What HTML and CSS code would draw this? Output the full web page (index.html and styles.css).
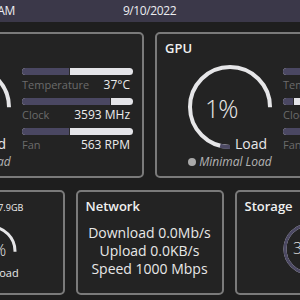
FILE: index.html
```html
<!DOCTYPE html>
<html>
<head>
<meta charset="utf-8">
<link rel="stylesheet" href="styles.css">
</head>
<body>
<div class="dash">
  <header class="topbar">
    <span class="time">10:24 AM</span>
    <span class="date">9/10/2022</span>
    <span class="spacer"></span>
  </header>

  <div class="row-top">
    <section class="panel panel-big">
      <h2 class="panel-title">CPU</h2>
      <div class="panel-body">
        <div class="gauge-col">
          <div class="gauge gauge-lg">
            <svg width="88" height="88" viewBox="0 0 88 88">
              <circle class="ring-track" cx="44" cy="44" r="40" stroke-dasharray="188.5 251.3" transform="rotate(90 44 44)"/>
              <circle class="ring-value" cx="44" cy="44" r="40" stroke-dasharray="14 251.3" transform="rotate(90 44 44)"/>
            </svg>
            <span class="gauge-pct">4%</span>
            <span class="gauge-load">Load</span>
          </div>
          <div class="status"><span class="dot"></span>Minimal Load</div>
        </div>
        <div class="stats">
          <div class="stat">
            <div class="bar"><div class="bar-fill" style="width:43%"></div></div>
            <div class="stat-row"><span class="stat-label">Temperature</span><span class="stat-value">37°C</span></div>
          </div>
          <div class="stat">
            <div class="bar"><div class="bar-fill" style="width:80%"></div></div>
            <div class="stat-row"><span class="stat-label">Clock</span><span class="stat-value">3593 MHz</span></div>
          </div>
          <div class="stat">
            <div class="bar"><div class="bar-fill" style="width:43%"></div></div>
            <div class="stat-row"><span class="stat-label">Fan</span><span class="stat-value">563 RPM</span></div>
          </div>
        </div>
      </div>
    </section>

    <section class="panel panel-big">
      <h2 class="panel-title">GPU</h2>
      <div class="panel-body">
        <div class="gauge-col">
          <div class="gauge gauge-lg">
            <svg width="88" height="88" viewBox="0 0 88 88">
              <circle class="ring-track" cx="44" cy="44" r="40" stroke-dasharray="188.5 251.3" transform="rotate(90 44 44)"/>
              <circle class="ring-value" cx="44" cy="44" r="40" stroke-dasharray="10 251.3" transform="rotate(90 44 44)"/>
            </svg>
            <span class="gauge-pct">1%</span>
            <span class="gauge-load">Load</span>
          </div>
          <div class="status"><span class="dot"></span>Minimal Load</div>
        </div>
        <div class="stats">
          <div class="stat">
            <div class="bar"><div class="bar-fill" style="width:40%"></div></div>
            <div class="stat-row"><span class="stat-label">Temperature</span><span class="stat-value">34°C</span></div>
          </div>
          <div class="stat">
            <div class="bar"><div class="bar-fill" style="width:10%"></div></div>
            <div class="stat-row"><span class="stat-label">Clock</span><span class="stat-value">210 MHz</span></div>
          </div>
          <div class="stat">
            <div class="bar"><div class="bar-fill" style="width:30%"></div></div>
            <div class="stat-row"><span class="stat-label">Fan</span><span class="stat-value">0 RPM</span></div>
          </div>
        </div>
      </div>
    </section>
  </div>

  <div class="row-bottom">
    <section class="panel panel-small">
      <h2 class="panel-title">Memory <span class="title-sub">5.1/7.9GB</span></h2>
      <div class="gauge gauge-sm">
        <svg width="54" height="54" viewBox="0 0 54 54">
          <circle class="ring-track thin" cx="27" cy="27" r="24" stroke-dasharray="113.1 150.8" transform="rotate(90 27 27)"/>
          <circle class="ring-value thin" cx="27" cy="27" r="24" stroke-dasharray="40 150.8" transform="rotate(90 27 27)"/>
        </svg>
        <span class="gauge-pct">35%</span>
        <span class="gauge-load">Load</span>
      </div>
    </section>

    <section class="panel panel-small">
      <h2 class="panel-title">Network</h2>
      <div class="net-lines">
        <p>Download 0.0Mb/s</p>
        <p>Upload 0.0KB/s</p>
        <p>Speed 1000 Mbps</p>
      </div>
    </section>

    <section class="panel panel-small">
      <h2 class="panel-title">Storage</h2>
      <div class="gauge gauge-sm">
        <svg width="54" height="54" viewBox="0 0 54 54">
          <circle class="ring-track thin" cx="27" cy="27" r="24" stroke-dasharray="113.1 150.8" transform="rotate(90 27 27)"/>
          <circle class="ring-value thin" cx="27" cy="27" r="24" stroke-dasharray="100 150.8" transform="rotate(90 27 27)"/>
        </svg>
        <span class="gauge-pct">38%</span>
        <span class="gauge-load">Used</span>
      </div>
    </section>
  </div>
</div>
</body>
</html>
```

FILE: styles.css
```css
* { box-sizing: border-box; }

html, body {
  margin: 0;
  padding: 0;
  background: #1e1e1e;
  overflow: hidden;
}

body {
  font-family: "Open Sans", "DejaVu Sans", sans-serif;
  color: #e8e8e8;
}

.dash {
  width: 511px;
  margin-left: -106px;
}

.topbar {
  height: 22px;
  background: #3b3849;
  display: grid;
  grid-template-columns: 1fr auto 1fr;
  align-items: center;
  font-size: 12px;
  letter-spacing: -0.4px;
  line-height: 22px;
  color: #ececf0;
}

.time {
  justify-self: end;
  padding-right: 108px;
}

.row-top {
  display: flex;
  gap: 11px;
  margin-top: 10px;
}

.panel {
  background: #232323;
  border: 2px solid #7a7a7a;
  border-radius: 5px;
}

.panel-big {
  width: 250px;
  height: 146px;
}

.panel-title {
  margin: 0;
  padding: 6px 0 0 8px;
  font-size: 13px;
  line-height: 16px;
  font-weight: 600;
  color: #f0f0f0;
}

.title-sub {
  font-size: 9px;
  font-weight: 500;
}

.panel-body {
  display: flex;
  padding-left: 29px;
  gap: 9px;
}

.gauge-col {
  width: 88px;
  display: flex;
  flex-direction: column;
  align-items: center;
}

.gauge {
  position: relative;
}

.gauge svg {
  display: block;
}

.gauge-lg {
  width: 88px;
  height: 88px;
  margin-top: 7px;
}

.ring-track {
  fill: none;
  stroke: #e6e6e8;
  stroke-width: 4;
}

.ring-value {
  fill: none;
  stroke: #4c4963;
  stroke-width: 4;
}

.thin {
  stroke-width: 3;
}

.gauge-lg .gauge-pct {
  position: absolute;
  left: 19px;
  top: 33px;
  font-size: 25px;
  line-height: 1;
  font-weight: 300;
  letter-spacing: -1px;
}

.gauge-lg .gauge-load {
  position: absolute;
  left: 49px;
  top: 74px;
  font-size: 14px;
  line-height: 1;
}

.status {
  margin-top: 4px;
  display: flex;
  align-items: center;
  gap: 3px;
  font-size: 12px;
  line-height: 14px;
  font-style: italic;
  color: #b4b4b4;
  white-space: nowrap;
}

.dot {
  width: 8px;
  height: 8px;
  border-radius: 50%;
  background: #a9a9a9;
}

.stats {
  width: 111px;
  padding-top: 12px;
  display: flex;
  flex-direction: column;
  gap: 6px;
}

.bar {
  height: 7px;
  border-radius: 4px;
  background: #e4e4e8;
  overflow: hidden;
}

.bar-fill {
  height: 100%;
  background: #4a4762;
  border-right: 1px solid #2a2a2a;
}

.stat-row {
  margin-top: 3px;
  display: flex;
  justify-content: space-between;
  padding-right: 3px;
  line-height: 14px;
  white-space: nowrap;
}

.stat-label {
  font-size: 11px;
  color: #6b6b6b;
}

.stat-value {
  font-size: 12px;
  color: #ececec;
}

.row-bottom {
  display: flex;
  justify-content: center;
  gap: 11px;
  margin-top: 12px;
}

.panel-small {
  width: 148px;
  height: 105px;
}

.gauge-sm {
  width: 54px;
  height: 54px;
  margin: 8px auto 0;
}

.gauge-sm .gauge-pct {
  position: absolute;
  left: 0;
  right: 0;
  top: 18px;
  text-align: center;
  font-size: 16px;
  line-height: 1;
  font-weight: 300;
}

.gauge-sm .gauge-load {
  position: absolute;
  left: 30px;
  top: 43px;
  font-size: 11px;
  line-height: 1;
}

.net-lines {
  margin-top: 10px;
  text-align: center;
}

.net-lines p {
  margin: 0;
  font-size: 14px;
  line-height: 18px;
}
```
